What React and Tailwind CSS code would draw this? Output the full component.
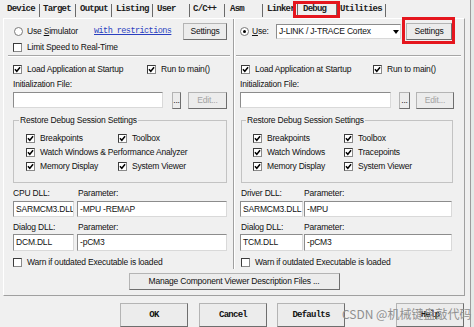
import React from 'react';

const tabs = [
  { label: 'Device', cls: 'w-[36px] pl-[4px]' },
  { label: 'Target', cls: 'w-[35px] pl-[3px]' },
  { label: 'Output', cls: 'w-[35px] pl-[4px]' },
  { label: 'Listing', cls: 'w-[40px] pl-[4px]' },
  { label: 'User', cls: 'w-[36px] pl-[4px]' },
  { label: 'C/C++', cls: 'w-[34px] pl-[3px]' },
  { label: 'Asm', cls: 'w-[37px] pl-[5px]' },
  { label: 'Linker', cls: 'w-[34px] pl-[4px]' },
  { label: 'Debug', cls: 'w-[38px] pl-[5px]', marked: true },
  { label: 'Utilities', cls: 'w-[48px] pl-[3px]' },
];

function Tick() {
  return (
    <svg viewBox="0 0 9 9" className="w-[7px] h-[7px]">
      <path d="M1.2 4.2 L3.6 6.8 L7.8 1.6" stroke="#000" strokeWidth="1.9" fill="none" />
    </svg>
  );
}

function Check({ checked = true, children, className = '' }) {
  return (
    <div className={`flex items-center gap-[5px] ${className}`}>
      <span className="w-[9px] h-[9px] shrink-0 bg-white border border-[#8a8a8a] border-t-[#3c3c3c] border-l-[#3c3c3c] flex items-center justify-center">
        {checked && <Tick />}
      </span>
      <span className="whitespace-nowrap">{children}</span>
    </div>
  );
}

function Radio({ on = false }) {
  return (
    <span className="w-[9px] h-[9px] shrink-0 rounded-full bg-white border border-[#7a7a7a] flex items-center justify-center">
      {on && <span className="w-[3px] h-[3px] rounded-full bg-black" />}
    </span>
  );
}

function Btn({ children, className = '', disabled = false }) {
  return (
    <div
      className={`h-[17px] shrink-0 flex items-center justify-center bg-[#ececec] border border-[#b4b4b4] border-b-[#6e6e6e] border-r-[#6e6e6e] whitespace-nowrap ${disabled ? 'text-[#a3a3a3]' : ''} ${className}`}
    >
      {children}
    </div>
  );
}

function Field({ children, className = '' }) {
  return (
    <div className={`h-[16px] shrink-0 overflow-hidden bg-white border border-[#d9d9d9] border-t-[#8c8c8c] border-l-[#8c8c8c] pl-[2px] flex items-center whitespace-nowrap ${className}`}>
      {children}
    </div>
  );
}

function Rule({ className = '' }) {
  return <div className={`h-[2px] border-t border-[#a6a6a6] border-b border-b-white ${className}`} />;
}

export default function App() {
  return (
    <div className="w-[474px] h-[327px] relative overflow-hidden flex bg-[#f0f0f0] text-[#111] text-[8.5px] leading-[11px] tracking-[-0.2px] font-['Liberation_Sans',Arial,sans-serif]">
      <div className="w-[470px] flex flex-col">
        {/* tab strip */}
        <div className="h-[18px] flex pl-[3px] font-['Liberation_Mono',monospace] font-bold text-[9px] tracking-[-0.75px] text-[#1c1c1c]">
          {tabs.map((t) => (
            <div key={t.label} className="flex items-center h-[18px]">
              <span className={`relative h-[18px] flex items-center ${t.cls}`}>
                {t.label}
                {t.marked && (
                  <span className="absolute -left-[5px] -right-[4px] top-[1px] bottom-0 border-[3px] border-[#e5161e]" />
                )}
              </span>
              <span className="w-px h-[13px] bg-[#6a6a6a] mt-[3px]" />
            </div>
          ))}
        </div>

        {/* tab page */}
        <div className="ml-[3px] w-[462px] h-[280px] border border-[#a0a0a0] border-t-white border-l-white flex flex-col">
          <div className="h-[250px] flex">
            {/* left: simulator */}
            <div className="w-[230px] border-r border-[#a0a0a0] pl-[9px] pr-[6px] pt-[4px] flex flex-col">
              <div className="h-[17px] flex items-center">
                <div className="w-[80px] ml-[1px] flex items-center gap-[4px]">
                  <Radio />
                  <span>Use <span className="underline">S</span>imulator</span>
                </div>
                <span className="font-['Liberation_Mono',monospace] text-[8.5px] tracking-[-0.55px] text-[#2a3fbf] underline">with restrictions</span>
                <Btn className="ml-auto w-[44px]">Settings</Btn>
              </div>
              <Check checked={false} className="mt-[3px] h-[9px]">Limit Speed to Real-Time</Check>
              <Rule className="mt-[3px] -ml-[5px] -mr-[3px]" />
              <div className="mt-[8px] h-[9px] flex items-center">
                <Check className="w-[134px]">Load Application at Startup</Check>
                <Check>Run to main()</Check>
              </div>
              <div className="mt-[5px]">Initialization File:</div>
              <div className="mt-[2px] flex">
                <Field className="w-[150px]" />
                <Btn className="ml-[9px] w-[9px] h-[16px]">...</Btn>
                <Btn disabled className="ml-[7px] w-[39px] h-[16px]">Edit...</Btn>
              </div>
              <fieldset className="mt-[6px] w-[214px] border border-[#c3c3c3] pl-[5px] pb-[9px]">
                <legend className="px-[1px]">Restore Debug Session Settings</legend>
                <div className="pl-[7px] pt-[5px] flex flex-col">
                  <div className="h-[14px] flex items-center">
                    <Check className="w-[92px]">Breakpoints</Check>
                    <Check>Toolbox</Check>
                  </div>
                  <div className="h-[14px] flex items-center">
                    <Check>Watch Windows &amp; Performance Analyzer</Check>
                  </div>
                  <div className="h-[14px] flex items-center">
                    <Check className="w-[92px]">Memory Display</Check>
                    <Check>System Viewer</Check>
                  </div>
                </div>
              </fieldset>
              <div className="mt-[5px] flex">
                <span className="w-[65px]">CPU DLL:</span>
                <span>Parameter:</span>
              </div>
              <div className="mt-[2px] flex">
                <Field className="w-[61px]">SARMCM3.DLL</Field>
                <Field className="ml-[3px] w-[150px]">-MPU -REMAP</Field>
              </div>
              <div className="mt-[5px] flex">
                <span className="w-[65px]">Dialog DLL:</span>
                <span>Parameter:</span>
              </div>
              <div className="mt-[1px] flex">
                <Field className="w-[61px] h-[17px]">DCM.DLL</Field>
                <Field className="ml-[3px] w-[150px] h-[17px]">-pCM3</Field>
              </div>
              <Check checked={false} className="mt-[7px] h-[9px]">Warn if outdated Executable is loaded</Check>
            </div>

            {/* right: target driver */}
            <div className="flex-1 border-l border-white pl-[6px] pr-[9px] pt-[4px] flex flex-col">
              <div className="h-[17px] flex items-center">
                <div className="w-[36px] -ml-[1px] flex items-center gap-[3px]">
                  <Radio on />
                  <span><span className="underline">U</span>se:</span>
                </div>
                <div className="w-[125px] h-[15px] bg-white border border-[#d9d9d9] border-t-[#8c8c8c] border-l-[#8c8c8c] pl-[2px] pr-[1px] flex items-center justify-between whitespace-nowrap">
                  <span>J-LINK / J-TRACE Cortex</span>
                  <svg viewBox="0 0 6 4" className="w-[6px] h-[4px]">
                    <path d="M0 0 H6 L3 4 Z" fill="#000" />
                  </svg>
                </div>
                <div className="relative ml-[5px]">
                  <Btn className="w-[46px]">Settings</Btn>
                  <span className="absolute -left-[4px] -right-[3px] -top-[6px] -bottom-[4px] border-[3px] border-[#e5161e]" />
                </div>
              </div>
              <Rule className="mt-[15px] -ml-[5px] -mr-[6px]" />
              <div className="mt-[8px] h-[9px] flex items-center">
                <Check className="w-[132px]">Load Application at Startup</Check>
                <Check>Run to main()</Check>
              </div>
              <div className="mt-[5px] -ml-[1px]">Initialization File:</div>
              <div className="mt-[2px] -ml-[1px] flex">
                <Field className="w-[151px]" />
                <Btn className="ml-[8px] w-[11px] h-[16px]">...</Btn>
                <Btn disabled className="ml-[6px] w-[38px] h-[16px]">Edit...</Btn>
              </div>
              <fieldset className="mt-[6px] w-[212px] border border-[#c3c3c3] pl-[4px] pb-[9px]">
                <legend className="px-[1px]">Restore Debug Session Settings</legend>
                <div className="pl-[7px] pt-[5px] flex flex-col">
                  <div className="h-[14px] flex items-center">
                    <Check className="w-[91px]">Breakpoints</Check>
                    <Check>Toolbox</Check>
                  </div>
                  <div className="h-[14px] flex items-center">
                    <Check className="w-[91px]">Watch Windows</Check>
                    <Check>Tracepoints</Check>
                  </div>
                  <div className="h-[14px] flex items-center">
                    <Check className="w-[91px]">Memory Display</Check>
                    <Check>System Viewer</Check>
                  </div>
                </div>
              </fieldset>
              <div className="mt-[5px] flex">
                <span className="w-[63px]">Driver DLL:</span>
                <span>Parameter:</span>
              </div>
              <div className="mt-[2px] -ml-[1px] flex">
                <Field className="w-[63px]">SARMCM3.DLL</Field>
                <Field className="ml-[1px] w-[148px]">-MPU</Field>
              </div>
              <div className="mt-[5px] flex">
                <span className="w-[63px]">Dialog DLL:</span>
                <span>Parameter:</span>
              </div>
              <div className="mt-[1px] -ml-[1px] flex">
                <Field className="w-[63px] h-[17px]">TCM.DLL</Field>
                <Field className="ml-[1px] w-[148px] h-[17px]">-pCM3</Field>
              </div>
              <Check checked={false} className="mt-[7px] h-[9px]">Warn if outdated Executable is loaded</Check>
            </div>
          </div>
          <div className="mt-[4px] flex justify-center">
            <Btn className="w-[211px]">Manage Component Viewer Description Files ...</Btn>
          </div>
        </div>

        {/* dialog buttons */}
        <div className="mt-[7px] pl-[120px] flex font-['Liberation_Mono',monospace] font-bold text-[9px] tracking-[-0.75px]">
          <Btn className="w-[68px] h-[24px]">OK</Btn>
          <Btn className="ml-[11px] w-[68px] h-[24px]">Cancel</Btn>
          <Btn className="ml-[10px] w-[68px] h-[24px]">Defaults</Btn>
          <Btn className="ml-[51px] w-[68px] h-[24px]">Help</Btn>
        </div>
      </div>
      <div className="w-px bg-[#9c9c9c]" />
      <div className="flex-1 bg-[#e4ebe8]" />

      <span className="absolute left-[342px] top-[306px] text-[12px] leading-[16px] tracking-normal text-[#8f8f8f] font-['Noto_Sans_CJK_SC',sans-serif] whitespace-nowrap">
        CSDN @机械键盘敲代码
      </span>
    </div>
  );
}
